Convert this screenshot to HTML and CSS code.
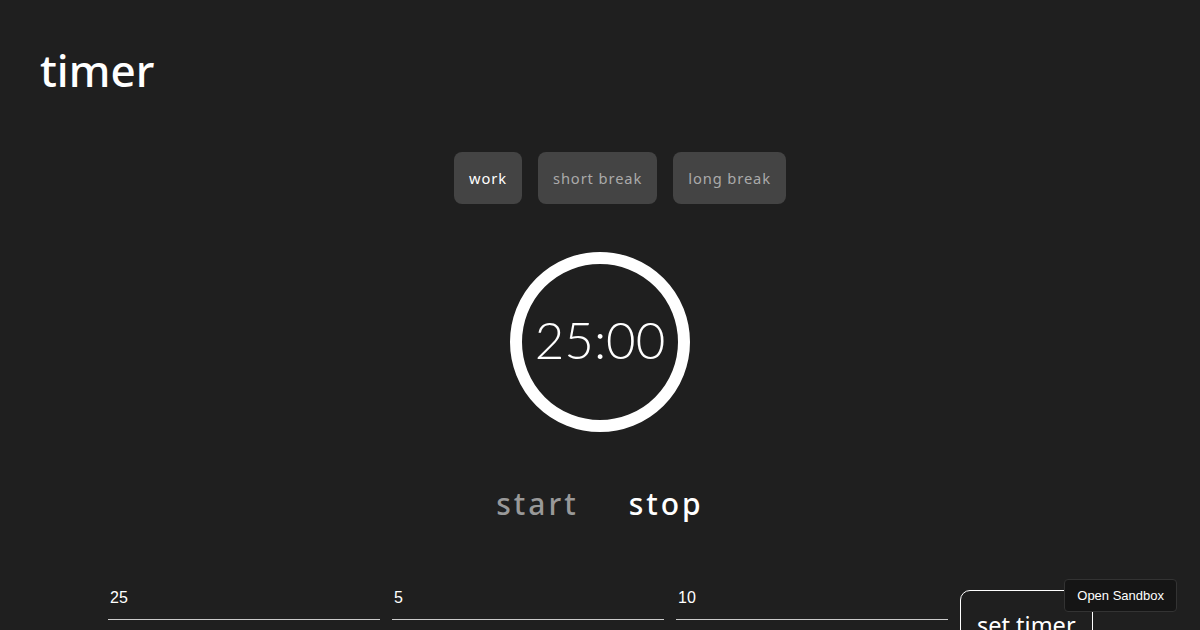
FILE: index.html
```html
<!DOCTYPE html>
<html lang="en">
<head>
<meta charset="UTF-8">
<meta name="viewport" content="width=device-width, initial-scale=1.0">
<title>timer</title>
<link rel="stylesheet" href="styles.css">
</head>
<body>
<h1 class="title">timer</h1>

<div class="modes">
  <button class="mode active">work</button>
  <button class="mode">short break</button>
  <button class="mode">long break</button>
</div>

<div class="clock">
  <span class="time">25:00</span>
</div>

<div class="controls">
  <button class="control">start</button>
  <button class="control active">stop</button>
</div>

<form class="settings">
  <input type="number" class="field" value="25">
  <input type="number" class="field" value="5">
  <input type="number" class="field" value="10">
  <button type="button" class="set-btn">set timer</button>
</form>

<a class="sandbox" href="#">Open Sandbox</a>
</body>
</html>
```

FILE: styles.css
```css
body {
  margin: 0;
  background-color: #1f1f1f;
  color: #fff;
  font-family: "Noto Sans", "Open Sans", sans-serif;
  height: 630px;
  overflow: hidden;
}
.title {
  margin: 0;
  padding: 40px 0 0 40px;
  font-size: 44px;
  font-weight: 500;
  line-height: 60px;
}
.modes {
  display: flex;
  justify-content: center;
  gap: 16px;
  margin-top: 52px;
  padding-left: 40px;
}
.mode {
  height: 52px;
  padding: 0 15px;
  border: none;
  border-radius: 8px;
  background-color: #444;
  color: #aaa;
  font-family: "Noto Sans", sans-serif;
  font-size: 14.7px;
  letter-spacing: 0.9px;
  cursor: pointer;
}
.mode.active {
  color: #fff;
}
.clock {
  width: 156px;
  height: 156px;
  margin: 48px auto 0;
  border: 12px solid #fff;
  border-radius: 50%;
  display: flex;
  justify-content: center;
  align-items: center;
}
.time {
  font-family: "Lato", sans-serif;
  font-weight: 300;
  font-size: 51px;
  margin-top: -6px;
}
.controls {
  display: flex;
  justify-content: center;
  gap: 50px;
  margin-top: 52px;
}
.control {
  background: none;
  border: none;
  padding: 0;
  color: #999;
  font-family: "Noto Sans", sans-serif;
  font-size: 30px;
  font-weight: 500;
  letter-spacing: 3px;
  line-height: 40px;
  cursor: pointer;
}
.control.active {
  color: #fff;
}
.settings {
  display: flex;
  gap: 12px;
  width: 984px;
  margin: 52px auto 0;
  align-items: flex-start;
}
.field {
  flex: 0 0 272px;
  width: 272px;
  box-sizing: border-box;
  height: 44px;
  background: none;
  border: none;
  border-bottom: 1px solid #ccc;
  color: #fff;
  font-family: "Liberation Sans", Arial, sans-serif;
  font-size: 16px;
  padding: 0 2px;
  outline: none;
  -moz-appearance: textfield;
}
.field::-webkit-inner-spin-button,
.field::-webkit-outer-spin-button {
  -webkit-appearance: none;
}
.set-btn {
  flex: 0 0 auto;
  white-space: nowrap;
  margin-top: 14px;
  padding: 18px 16px;
  background: none;
  border: 1px solid #fff;
  border-radius: 10px;
  color: #fff;
  font-family: "Noto Sans", sans-serif;
  font-size: 23.5px;
  line-height: 32px;
  cursor: pointer;
}
.sandbox {
  position: fixed;
  right: 23px;
  bottom: 18px;
  padding: 8px 12px;
  line-height: 15px;
  background-color: #151515;
  border: 1px solid #333;
  border-radius: 4px;
  color: #fff;
  font-family: "Liberation Sans", Arial, sans-serif;
  font-size: 13px;
  text-decoration: none;
}
```
